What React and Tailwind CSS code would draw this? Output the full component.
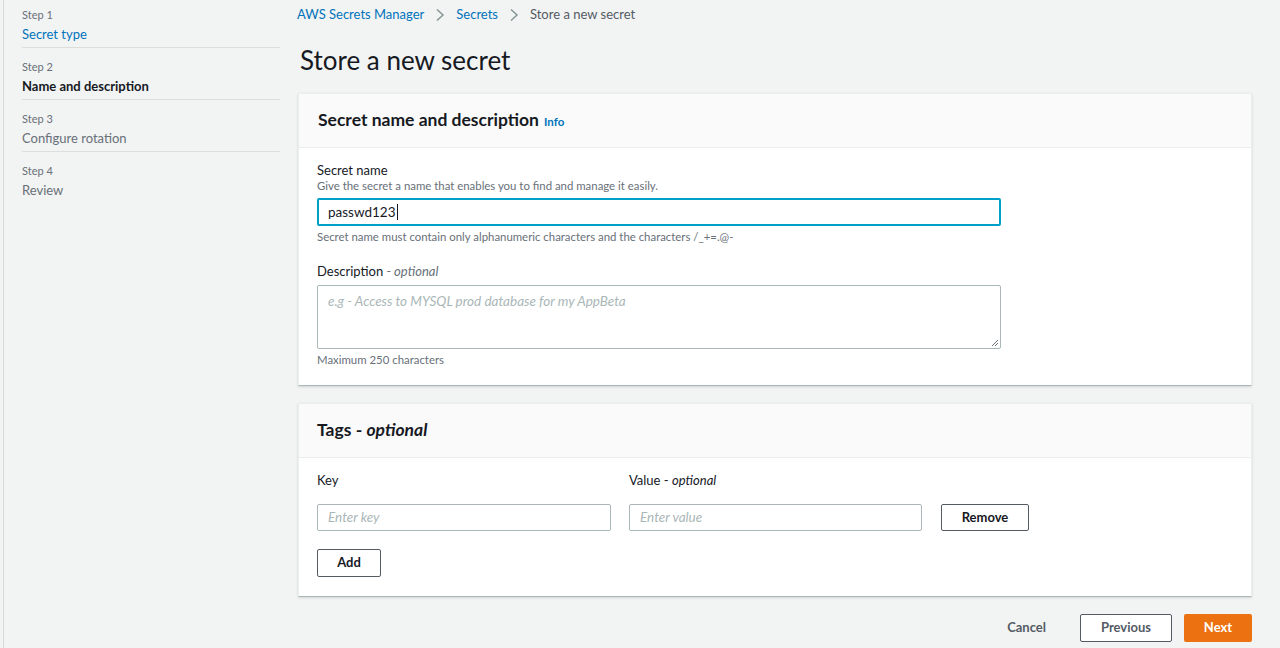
import React from "react";

const F = { fontFamily: "Lato, 'Liberation Sans', sans-serif" };

function Chevron() {
  return (
    <svg width="10" height="14" viewBox="0 0 10 14" className="mx-[11px]">
      <path d="M2 1.5 L8 7 L2 12.5" fill="none" stroke="#879596" strokeWidth="1.5" />
    </svg>
  );
}

function Step({ n, title, state, first, last }) {
  const cls =
    state === "link"
      ? "text-[#0073bb]"
      : state === "active"
      ? "text-[#16191f] font-bold"
      : "text-[#687078]";
  return (
    <div className={`${last ? "" : "border-b border-[#dcdede]"} ${first ? "pt-[8px]" : "pt-[12px]"} pb-[2px]`}>
      <div className="text-[11px] text-[#687078] leading-[14px]">Step {n}</div>
      <div className={`text-[13px] leading-[22px] mt-[1px] ${cls}`}>{title}</div>
    </div>
  );
}

export default function App() {
  return (
    <div style={F} className="w-[1280px] h-[648px] bg-[#f2f3f3] flex overflow-hidden text-[#16191f]">
      <div className="w-[4px] border-r border-[#d5dbdb]" />
      <aside className="w-[276px] pl-[18px] shrink-0">
        <Step n={1} title="Secret type" state="link" first />
        <Step n={2} title="Name and description" state="active" />
        <Step n={3} title="Configure rotation" state="" />
        <Step n={4} title="Review" state="" last />
      </aside>
      <main className="ml-[18px] w-[954px] flex flex-col">
        <nav className="flex items-center h-[30px] text-[13px] -ml-[1px]">
          <span className="text-[#0073bb]">AWS Secrets Manager</span>
          <Chevron />
          <span className="text-[#0073bb]">Secrets</span>
          <Chevron />
          <span className="text-[#545b64]">Store a new secret</span>
        </nav>
        <h1 className="text-[26px] leading-[34px] mt-[13px] ml-[2px] font-normal">Store a new secret</h1>
        <section className="mt-[16px] bg-white border border-[#eaeded] border-b-[#aab7b8] shadow-sm">
          <div className="h-[54px] bg-[#fafafa] border-b border-[#eaeded] flex items-center px-[19px]">
            <span className="text-[17.5px] font-bold">Secret name and description</span>
            <span className="text-[11.5px] text-[#0073bb] font-bold ml-[5px] mt-[3px]">Info</span>
          </div>
          <div className="px-[18px] pt-[14px] pb-[18px]">
            <div className="text-[13px] leading-[16px]">Secret name</div>
            <div className="text-[11.4px] leading-[14px] text-[#687078] mt-[1px]">
              Give the secret a name that enables you to find and manage it easily.
            </div>
            <div className="mt-[5px] w-[684px] h-[28px] border-2 border-[#00a1c9] rounded-[2px] flex items-center px-[9px] text-[13.5px]">
              passwd123<span className="w-px h-[16px] bg-[#16191f] ml-px" />
            </div>
            <div className="text-[11.4px] leading-[14px] text-[#687078] mt-[4px]">
              Secret name must contain only alphanumeric characters and the characters /_+=.@-
            </div>
            <div className="text-[13px] leading-[16px] mt-[19px]">
              Description <span className="text-[#687078] italic">- optional</span>
            </div>
            <div className="relative mt-[6px] w-[684px] h-[64px] border border-[#aab7b8] rounded-[2px] px-[10px] pt-[5px] text-[13.5px] italic text-[#aab7b8]">
              e.g - Access to MYSQL prod database for my AppBeta
              <svg className="absolute right-[1px] bottom-[1px]" width="8" height="8" viewBox="0 0 8 8">
                <path d="M7 1 L1 7 M7 4 L4 7" stroke="#687078" strokeWidth="1" />
              </svg>
            </div>
            <div className="text-[11.4px] leading-[14px] text-[#687078] mt-[4px]">Maximum 250 characters</div>
          </div>
        </section>
        <section className="mt-[17px] bg-white border border-[#eaeded] border-b-[#aab7b8] shadow-sm">
          <div className="h-[54px] bg-[#fafafa] border-b border-[#eaeded] flex items-center px-[18px]">
            <span className="text-[17.5px] font-bold">
              Tags - <span className="italic">optional</span>
            </span>
          </div>
          <div className="px-[18px] pt-[14px] pb-[19px]">
            <div className="flex text-[13px] leading-[16px]">
              <div className="w-[312px]">Key</div>
              <div>
                Value - <span className="italic">optional</span>
              </div>
            </div>
            <div className="flex mt-[16px] items-center">
              <div className="w-[294px] h-[27px] border border-[#aab7b8] rounded-[2px] flex items-center px-[10px] text-[13.5px] italic text-[#aab7b8]">
                Enter key
              </div>
              <div className="ml-[18px] w-[293px] h-[27px] border border-[#aab7b8] rounded-[2px] flex items-center px-[10px] text-[13.5px] italic text-[#aab7b8]">
                Enter value
              </div>
              <div className="ml-[19px] w-[88px] h-[27px] border border-[#545b64] rounded-[2px] flex items-center justify-center text-[13px] font-bold">
                Remove
              </div>
            </div>
            <div className="mt-[18px] w-[64px] h-[28px] border border-[#545b64] rounded-[2px] flex items-center justify-center text-[13px] font-bold">
              Add
            </div>
          </div>
        </section>
        <div className="flex justify-end items-center mt-[17px]">
          <span className="text-[13px] font-bold text-[#545b64] mr-[34px]">Cancel</span>
          <div className="w-[92px] h-[28px] border border-[#545b64] rounded-[2px] flex items-center justify-center text-[13px] font-bold text-[#545b64] bg-white">
            Previous
          </div>
          <div className="ml-[12px] w-[68px] h-[28px] rounded-[2px] bg-[#ec7211] flex items-center justify-center text-[13px] font-bold text-white">
            Next
          </div>
        </div>
      </main>
    </div>
  );
}
